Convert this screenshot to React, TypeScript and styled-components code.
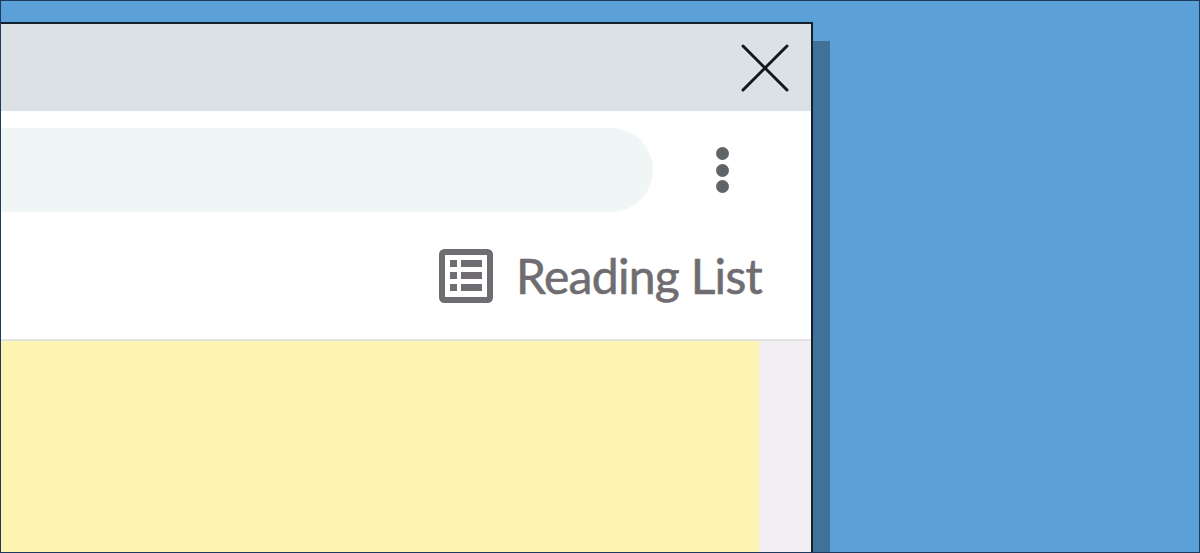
import React from 'react';
import styled, { createGlobalStyle } from 'styled-components';

const GlobalStyle = createGlobalStyle`
    html, body {
        margin: 0;
        padding: 0;
        height: 100%;
        overflow: hidden;
    }
    #root {
        height: 100%;
    }
`;

const App = () => (
    <>
        <GlobalStyle />
        <Page>
            <BrowserWindow>
                <TitleBar>
                    <CloseIcon viewBox="0 0 48 48" aria-label="Close">
                        <path d="M2 2 L46 46 M46 2 L2 46" />
                    </CloseIcon>
                </TitleBar>
                <Toolbar>
                    <Omnibox />
                    <MenuDots>
                        <Dot />
                        <Dot />
                        <Dot />
                    </MenuDots>
                </Toolbar>
                <BookmarksBar>
                    <ListIcon viewBox="0 0 54 54">
                        <rect x="3" y="3" width="48" height="48" rx="2.5" />
                        <g>
                            <rect className="fill" x="11" y="11" width="7" height="7" />
                            <rect className="fill" x="11" y="23" width="7" height="7" />
                            <rect className="fill" x="11" y="35" width="7" height="7" />
                            <rect className="fill" x="22" y="11" width="21" height="7" />
                            <rect className="fill" x="22" y="23" width="21" height="7" />
                            <rect className="fill" x="22" y="35" width="21" height="7" />
                        </g>
                    </ListIcon>
                    <ReadingLabel>Reading List</ReadingLabel>
                </BookmarksBar>
                <Content>
                    <PageArea />
                    <Scrollbar />
                </Content>
            </BrowserWindow>
        </Page>
    </>
);

const Page = styled.div`
    box-sizing: border-box;
    height: 553px;
    padding-top: 21px;
    overflow: hidden;
    background: #5ba1d7;
    border: 1px solid #1d3a5c;
`;

const BrowserWindow = styled.div`
    box-sizing: border-box;
    width: 812px;
    height: 600px;
    display: flex;
    flex-direction: column;
    background: #ffffff;
    border: 2px solid #14202c;
    border-left: none;
    box-shadow: 17px 19px 0 #3f7199;
`;

const TitleBar = styled.div`
    box-sizing: border-box;
    height: 87px;
    flex: none;
    display: flex;
    justify-content: flex-end;
    align-items: center;
    padding-right: 22px;
    background: #dce1e6;
`;

const CloseIcon = styled.svg`
    width: 48px;
    height: 48px;
    fill: none;
    stroke: #14181c;
    stroke-width: 3;
    stroke-linecap: round;
`;

const Toolbar = styled.div`
    box-sizing: border-box;
    height: 119px;
    flex: none;
    display: flex;
    align-items: flex-start;
    padding-top: 17px;
    background: #ffffff;
`;

const Omnibox = styled.div`
    width: 652px;
    height: 84px;
    flex: none;
    background: #f0f5f6;
    border-radius: 0 42px 42px 0;
`;

const MenuDots = styled.div`
    display: flex;
    flex-direction: column;
    gap: 3.5px;
    margin-left: 63px;
    margin-top: 19px;
`;

const Dot = styled.span`
    display: block;
    width: 13px;
    height: 13px;
    border-radius: 50%;
    background: #5f6566;
`;

const BookmarksBar = styled.div`
    box-sizing: border-box;
    height: 111px;
    flex: none;
    display: flex;
    justify-content: flex-end;
    align-items: flex-start;
    gap: 23px;
    padding-right: 49px;
    padding-top: 19px;
    background: #ffffff;
    border-bottom: 2px solid #e2e4e4;
`;

const ListIcon = styled.svg`
    width: 54px;
    height: 54px;
    flex: none;
    fill: none;
    stroke: #6f6d71;
    stroke-width: 6;

    .fill {
        fill: #6f6d71;
        stroke: none;
    }
`;

const ReadingLabel = styled.span`
    font-family: 'Lato', sans-serif;
    font-size: 48px;
    line-height: 54px;
    color: #6f6d71;
    -webkit-text-stroke: 0.6px #6f6d71;
    letter-spacing: -0.7px;
    white-space: nowrap;
`;

const Content = styled.div`
    flex: 1;
    display: flex;
    min-height: 0;
`;

const PageArea = styled.div`
    width: 758px;
    flex: none;
    background: #fef4b2;
`;

const Scrollbar = styled.div`
    flex: 1;
    background: #f1eff1;
`;

export default App;
